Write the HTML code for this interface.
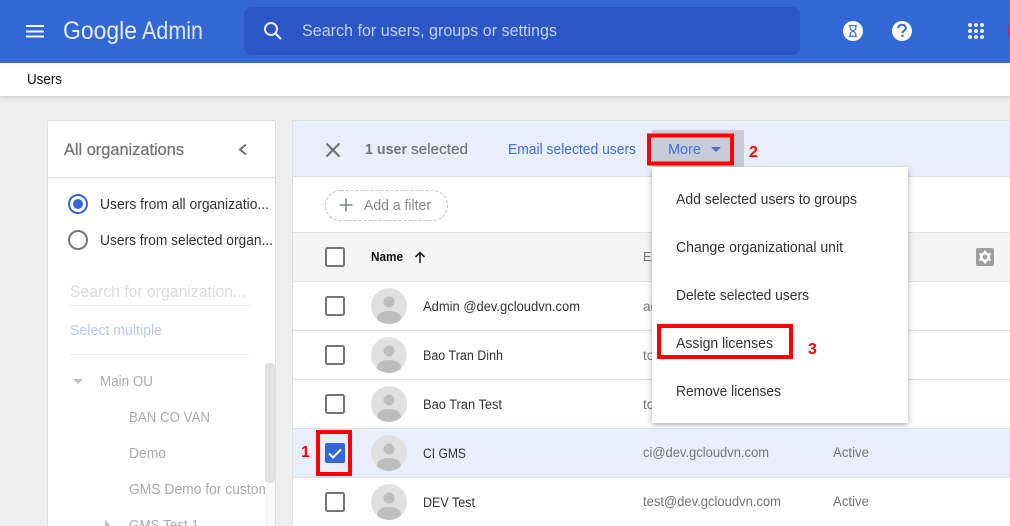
<!DOCTYPE html>
<html><head><meta charset="utf-8"><title>Google Admin</title>
<style>
html,body{margin:0;padding:0;background:#eee;width:1010px;height:526px;overflow:hidden}
svg{display:block}
text{font-family:"Liberation Sans",sans-serif;white-space:pre}
</style></head>
<body>
<svg width="1010" height="526" viewBox="0 0 1010 526" xmlns="http://www.w3.org/2000/svg">
<defs>
<filter id="s1" x="-20%" y="-20%" width="140%" height="140%"><feDropShadow dx="0" dy="2" stdDeviation="3" flood-color="#000" flood-opacity=".32"/></filter>
<filter id="s2" x="-5%" y="-50%" width="110%" height="200%"><feDropShadow dx="0" dy="1" stdDeviation="2" flood-color="#000" flood-opacity=".2"/></filter>
<clipPath id="cl"><rect x="49" y="122" width="216" height="404"/></clipPath>
<clipPath id="a1"><circle cx="389" cy="306" r="18"/></clipPath>
<clipPath id="a2"><circle cx="389" cy="355" r="18"/></clipPath>
<clipPath id="a3"><circle cx="389" cy="404" r="18"/></clipPath>
<clipPath id="a4"><circle cx="389" cy="453" r="18"/></clipPath>
<clipPath id="a5"><circle cx="389" cy="502" r="18"/></clipPath>
</defs>
<rect width="1010" height="526" fill="#eeeeee"/>

<!-- sub bar -->
<rect x="0" y="63" width="1010" height="33" fill="#fff" filter="url(#s2)"/>
<text x="27" y="84" font-size="14.500" fill="#111" textLength="35" lengthAdjust="spacingAndGlyphs">Users</text>

<!-- header -->
<rect width="1010" height="63" fill="#3367d6"/>
<rect x="26" y="25" width="18" height="2" fill="#fff"/><rect x="26" y="30.500" width="18" height="2" fill="#fff"/><rect x="26" y="35.500" width="18" height="2" fill="#fff"/>
<text x="63" y="39" font-size="25" fill="#e6ecfa" textLength="74" lengthAdjust="spacingAndGlyphs">Google</text>
<text x="142" y="39" font-size="25" fill="#dde6f9" textLength="61" lengthAdjust="spacingAndGlyphs">Admin</text>
<rect x="244" y="7" width="556" height="48" rx="8" fill="#2a56c6"/>
<circle cx="271" cy="29" r="6" fill="none" stroke="#e8eefb" stroke-width="2"/>
<path d="M275.500 33.500L281 39" stroke="#e8eefb" stroke-width="2.200" fill="none"/>
<text x="302" y="36" font-size="16.500" fill="#c3d2f3" textLength="255" lengthAdjust="spacingAndGlyphs">Search for users, groups or settings</text>
<circle cx="853" cy="31" r="10" fill="#fff"/>
<path d="M849 25.700h8M849 36.300h8M850.200 26v2.200c0 1.400 2.800 2.800 2.800 2.800s2.800-1.400 2.800-2.800V26M850.200 36v-2.200c0-1.400 2.800-2.800 2.800-2.800s2.800 1.400 2.800 2.800V36" fill="none" stroke="#3367d6" stroke-width="1.100"/>
<circle cx="902" cy="31" r="10" fill="#fff"/>
<path d="M898.200 28.300c0-2.200 1.700-3.600 3.800-3.600s3.800 1.400 3.800 3.300c0 2.600-3.300 2.600-3.300 5" fill="none" stroke="#3367d6" stroke-width="2"/>
<rect x="901.400" y="34.700" width="2.200" height="2.200" fill="#3367d6"/>
<g fill="#e8eefb">
<circle cx="970" cy="25" r="2"/><circle cx="976" cy="25" r="2"/><circle cx="982" cy="25" r="2"/>
<circle cx="970" cy="31" r="2"/><circle cx="976" cy="31" r="2"/><circle cx="982" cy="31" r="2"/>
<circle cx="970" cy="37" r="2"/><circle cx="976" cy="37" r="2"/><circle cx="982" cy="37" r="2"/>
</g>
<circle cx="1019" cy="31" r="11" fill="#d81b60"/>

<!-- left panel -->
<rect x="47.500" y="120.500" width="228" height="410" rx="2" fill="#fff" stroke="#dedede"/>
<text x="64" y="155" font-size="16.500" fill="#757575" textLength="120" lengthAdjust="spacingAndGlyphs" stroke="#757575" stroke-width=".25">All organizations</text>
<path d="M246 144.500L240 149.500L246 154.500" fill="none" stroke="#6f6f6f" stroke-width="2"/>
<rect x="48" y="177" width="227" height="1" fill="#e0e0e0"/>
<circle cx="78" cy="204" r="9" fill="none" stroke="#3367d6" stroke-width="2"/>
<circle cx="78" cy="204" r="5" fill="#3367d6"/>
<circle cx="78" cy="240" r="9" fill="none" stroke="#757575" stroke-width="2"/>
<text x="100" y="209" font-size="14.500" fill="#333" textLength="169" lengthAdjust="spacingAndGlyphs">Users from all organizatio...</text>
<text x="100" y="245" font-size="14.500" fill="#333" textLength="173" lengthAdjust="spacingAndGlyphs">Users from selected organ...</text>
<text x="70" y="297" font-size="16.500" fill="#dcdcdc" textLength="176" lengthAdjust="spacingAndGlyphs">Search for organization...</text>
<rect x="70" y="305" width="181" height="1" fill="#efefef"/>
<text x="70" y="335" font-size="14.500" fill="#b7caf4" textLength="92" lengthAdjust="spacingAndGlyphs">Select multiple</text>
<rect x="70" y="354" width="179" height="1" fill="#f0f0f0"/>
<path d="M73 379h10l-5 5z" fill="#c2c2c2"/>
<text x="100" y="386" font-size="14.500" fill="#ababab" textLength="53" lengthAdjust="spacingAndGlyphs">Main OU</text>
<text x="129" y="422" font-size="14.500" fill="#ababab" textLength="81" lengthAdjust="spacingAndGlyphs">BAN CO VAN</text>
<text x="129" y="458" font-size="14.500" fill="#ababab" textLength="37" lengthAdjust="spacingAndGlyphs">Demo</text>
<text x="129" y="494" font-size="14.500" fill="#ababab" clip-path="url(#cl)" textLength="141" lengthAdjust="spacingAndGlyphs">GMS Demo for custom</text>
<text x="129" y="530" font-size="14.500" fill="#ababab" textLength="70" lengthAdjust="spacingAndGlyphs">GMS Test 1</text>
<path d="M105 520l5 5-5 5z" fill="#c2c2c2"/>
<rect x="265" y="363" width="10" height="163" fill="#f9f9f9"/>
<rect x="265" y="363" width="10" height="120" rx="4" fill="#e1e1e1"/>

<!-- right panel -->
<rect x="292.500" y="120.500" width="730" height="410" fill="#fff" stroke="#dedede"/>
<rect x="293" y="121" width="717" height="55" fill="#e8eefb"/>
<rect x="293" y="176" width="717" height="1" fill="#dcdfe6"/>
<path d="M326.500 143.500L339.500 156.500M339.500 143.500L326.500 156.500" stroke="#6f6f6f" stroke-width="2" fill="none"/>
<text x="365" y="154" font-size="14.500" fill="#757575" font-weight="bold" textLength="42" lengthAdjust="spacingAndGlyphs">1 user</text>
<text x="411" y="154" font-size="14.500" fill="#757575" textLength="57" lengthAdjust="spacingAndGlyphs" stroke="#757575" stroke-width=".2">selected</text>
<text x="508" y="154" font-size="14.500" fill="#3f6fdc" textLength="128" lengthAdjust="spacingAndGlyphs">Email selected users</text>

<rect x="325.500" y="190.500" width="122" height="30" rx="15" fill="#fff" stroke="#c4c4c4" stroke-dasharray="3 2"/>
<path d="M346 198.500v13M339.500 205h13" stroke="#7d8590" stroke-width="1.600" fill="none"/>
<text x="364" y="210" font-size="14.500" fill="#8a8a8a" textLength="67" lengthAdjust="spacingAndGlyphs">Add a filter</text>

<rect x="293" y="232" width="717" height="1" fill="#e0e0e0"/>
<rect x="293" y="233" width="717" height="48" fill="#f4f4f4"/>
<rect x="293" y="281" width="717" height="1" fill="#e0e0e0"/>
<rect x="293" y="330" width="717" height="1" fill="#e0e0e0"/>
<rect x="293" y="379" width="717" height="1" fill="#e0e0e0"/>
<rect x="293" y="429" width="717" height="48" fill="#e8eefb"/>
<rect x="293" y="428" width="717" height="1" fill="#dfe1e6"/>
<rect x="293" y="477" width="717" height="1" fill="#e0e0e0"/>

<g fill="#fff" stroke="#757575" stroke-width="2">
<rect x="326" y="248" width="18" height="18" rx="1.500"/>
<rect x="326" y="297" width="18" height="18" rx="1.500"/>
<rect x="326" y="346" width="18" height="18" rx="1.500"/>
<rect x="326" y="395" width="18" height="18" rx="1.500"/>
<rect x="326" y="493" width="18" height="18" rx="1.500"/>
</g>
<rect x="325" y="443" width="20" height="20" rx="2" fill="#3367d6"/>
<path d="M329 453.500l4 4 8-8" fill="none" stroke="#fff" stroke-width="2"/>

<text x="371" y="261" font-size="12.500" font-weight="bold" fill="#111" textLength="32" lengthAdjust="spacingAndGlyphs">Name</text>
<path d="M420 263v-10M415.500 257l4.500-4.500 4.500 4.500" fill="none" stroke="#222" stroke-width="1.600"/>
<text x="643" y="261" font-size="12.500" fill="#757575">Em</text>

<!-- avatars -->
<g>
<circle cx="389" cy="306" r="18" fill="#e0e0e0"/><circle cx="389" cy="302" r="5.500" fill="#bdbdbd"/><ellipse cx="389" cy="318" rx="12" ry="7" fill="#bdbdbd" clip-path="url(#a1)"/>
<circle cx="389" cy="355" r="18" fill="#e0e0e0"/><circle cx="389" cy="351" r="5.500" fill="#bdbdbd"/><ellipse cx="389" cy="367" rx="12" ry="7" fill="#bdbdbd" clip-path="url(#a2)"/>
<circle cx="389" cy="404" r="18" fill="#e0e0e0"/><circle cx="389" cy="400" r="5.500" fill="#bdbdbd"/><ellipse cx="389" cy="416" rx="12" ry="7" fill="#bdbdbd" clip-path="url(#a3)"/>
<circle cx="389" cy="453" r="18" fill="#e0e0e0"/><circle cx="389" cy="449" r="5.500" fill="#bdbdbd"/><ellipse cx="389" cy="465" rx="12" ry="7" fill="#bdbdbd" clip-path="url(#a4)"/>
<circle cx="389" cy="502" r="18" fill="#e0e0e0"/><circle cx="389" cy="498" r="5.500" fill="#bdbdbd"/><ellipse cx="389" cy="514" rx="12" ry="7" fill="#bdbdbd" clip-path="url(#a5)"/>
</g>

<g font-size="13.500" fill="#333">
<text x="423" y="311" textLength="157" lengthAdjust="spacingAndGlyphs">Admin @dev.gcloudvn.com</text>
<text x="423" y="360" textLength="80" lengthAdjust="spacingAndGlyphs">Bao Tran Dinh</text>
<text x="423" y="409" textLength="79" lengthAdjust="spacingAndGlyphs">Bao Tran Test</text>
<text x="423" y="458" textLength="43" lengthAdjust="spacingAndGlyphs">CI GMS</text>
<text x="423" y="507" textLength="52" lengthAdjust="spacingAndGlyphs">DEV Test</text>
</g>
<g font-size="13.500" fill="#757575">
<text x="643" y="311">ad</text>
<text x="643" y="360">to</text>
<text x="643" y="409">to</text>
<text x="643" y="457" textLength="126" lengthAdjust="spacingAndGlyphs">ci@dev.gcloudvn.com</text>
<text x="643" y="506" textLength="138" lengthAdjust="spacingAndGlyphs">test@dev.gcloudvn.com</text>
<text x="833" y="457" textLength="36" lengthAdjust="spacingAndGlyphs">Active</text>
<text x="833" y="506" textLength="36" lengthAdjust="spacingAndGlyphs">Active</text>
</g>

<!-- gear -->
<rect x="976" y="248" width="18" height="18" rx="2" fill="#9e9e9e"/>
<circle cx="985" cy="257" r="3.700" fill="none" stroke="#fff" stroke-width="2.600"/>
<path d="M985 250.500v2.500M985 261v2.500M979.400 253.800l2.200 1.250M988.400 259l2.200 1.250M979.400 260.200l2.200-1.250M988.400 255l2.200-1.250" stroke="#fff" stroke-width="2.200" fill="none"/>

<!-- more button -->
<rect x="652" y="130" width="92" height="37" rx="2" fill="#c8ccd6"/>
<text x="668" y="154" font-size="14.500" fill="#3f6fdc" textLength="33" lengthAdjust="spacingAndGlyphs">More</text>
<path d="M711 147h10l-5 5z" fill="#3f6fdc"/>

<!-- menu -->
<rect x="652" y="167" width="256" height="256" rx="2" fill="#fff" filter="url(#s1)"/>
<g font-size="14.500" fill="#333">
<text x="676" y="204" textLength="181" lengthAdjust="spacingAndGlyphs">Add selected users to groups</text>
<text x="676" y="252" textLength="167" lengthAdjust="spacingAndGlyphs">Change organizational unit</text>
<text x="676" y="300" textLength="133" lengthAdjust="spacingAndGlyphs">Delete selected users</text>
<text x="676" y="348" textLength="97" lengthAdjust="spacingAndGlyphs">Assign licenses</text>
<text x="676" y="396" textLength="105" lengthAdjust="spacingAndGlyphs">Remove licenses</text>
</g>

<!-- annotations -->
<g fill="none" stroke="#ff0000" stroke-width="4">
<rect x="649" y="135.500" width="83" height="28"/>
<rect x="659" y="326" width="132" height="31"/>
<rect x="318" y="432" width="32" height="42"/>
</g>
<g font-size="16" font-weight="bold" fill="#ff0000">
<text x="749" y="157">2</text>
<text x="808" y="354">3</text>
<text x="301" y="457">1</text>
</g>
</svg>
</body></html>
